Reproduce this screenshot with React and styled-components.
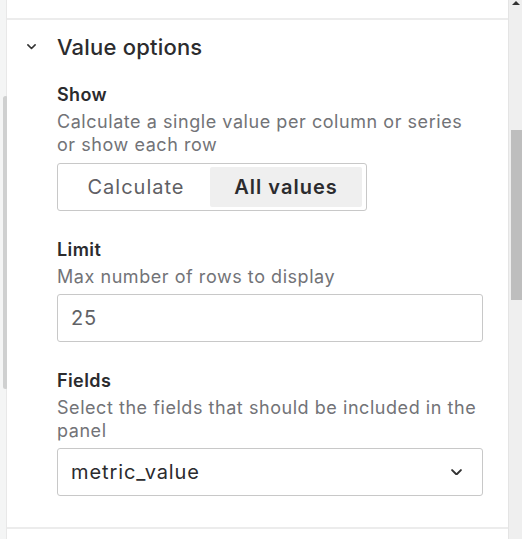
import React from 'react'
import styled, { createGlobalStyle } from 'styled-components'

const GlobalStyle = createGlobalStyle`
  html, body { margin: 0; padding: 0; background: #fff; }
  body { font-family: Inter, "Noto Sans", sans-serif; }
`

const Page = styled.div`
  display: flex;
  width: 522px;
  height: 539px;
  overflow: hidden;
`

const LeftRail = styled.div`
  width: 7px;
  background: #f4f5f5;
  border-right: 1px solid #e8e8e8;
  padding-top: 96px;
  padding-left: 3px;
  box-sizing: border-box;
`

const LeftThumb = styled.div`
  width: 5px;
  height: 293px;
  border-radius: 3px;
  background: #cfd0d0;
`

const Main = styled.div`
  flex: 1;
  display: flex;
  flex-direction: column;
  background: #fff;
`

const TopGap = styled.div`
  height: 18px;
  border-bottom: 2px solid #ececec;
`

const Section = styled.div`
  height: 507px;
  border-bottom: 2px solid #ececec;
  display: flex;
  flex-direction: column;
`

const Header = styled.div`
  display: flex;
  align-items: center;
  height: 54px;
  padding-left: 20px;
`

const ChevronWrap = styled.span`
  width: 9px;
  display: flex;
  margin-right: 21px;
  color: #333;
`

const HeaderTitle = styled.span`
  font-size: 22px;
  font-weight: 500;
  letter-spacing: 0.2px;
  color: #2c2c2e;
`

const Body = styled.div`
  padding-left: 50px;
  padding-right: 25px;
`

const Field = styled.div`
  margin-top: ${p => p.$top}px;
`

const Label = styled.div`
  font-size: 18px;
  font-weight: 600;
  letter-spacing: 0.4px;
  color: #2b2b2e;
  line-height: 22px;
`

const Desc = styled.div`
  max-width: 421px;
  font-size: 18px;
  letter-spacing: 0.55px;
  color: #727377;
  line-height: 23px;
  margin-top: 4px;
`

const Toggle = styled.div`
  display: flex;
  margin-top: 7px;
  width: 310px;
  height: 48px;
  box-sizing: border-box;
  border: 1px solid #c8c8c8;
  border-radius: 3px;
  padding: 3px 4px;
`

const ToggleOption = styled.div`
  flex: ${p => (p.$active ? '0 0 152px' : '1')};
  display: flex;
  align-items: center;
  justify-content: center;
  font-size: 20px;
  letter-spacing: 1px;
  font-weight: ${p => (p.$active ? 600 : 400)};
  color: ${p => (p.$active ? '#2b2b2e' : '#5f6064')};
  background: ${p => (p.$active ? '#efefef' : 'transparent')};
  border-radius: 2px;
`

const Box = styled.div`
  margin-top: 6px;
  height: 48px;
  box-sizing: border-box;
  border: 1px solid #c8c8c8;
  border-radius: 3px;
  display: flex;
  align-items: center;
  justify-content: space-between;
  padding: 0 20px 0 13px;
  font-size: 20px;
  letter-spacing: 0.9px;
  color: ${p => (p.$dark ? '#2b2b2e' : '#616266')};
`

const RightRail = styled.div`
  width: 14px;
  background: #efefef;
  border-left: 1px solid #e4e4e4;
  box-sizing: border-box;
  display: flex;
  flex-direction: column;
  align-items: flex-end;
`

const ArrowUp = styled.div`
  width: 0;
  height: 0;
  border-left: 4px solid transparent;
  border-right: 4px solid transparent;
  border-bottom: 4px solid #333;
  margin: 1px 0 0;
  align-self: center;
`

const RightThumb = styled.div`
  margin-top: 125px;
  width: 11px;
  height: 170px;
  background: #bebebe;
`

const SelectChevron = styled.span`
  display: flex;
  color: #333;
`

const Chevron = ({ size = 9 }) => (
  <svg width={size} height={size * 0.6} viewBox="0 0 10 6" fill="none">
    <path d="M1 1l4 4 4-4" stroke="currentColor" strokeWidth="1.8" strokeLinecap="round" strokeLinejoin="round" />
  </svg>
)

export default function App() {
  return (
    <Page>
      <GlobalStyle />
      <LeftRail>
        <LeftThumb />
      </LeftRail>
      <Main>
        <TopGap />
        <Section>
          <Header>
            <ChevronWrap><Chevron /></ChevronWrap>
            <HeaderTitle>Value options</HeaderTitle>
          </Header>
          <Body>
            <Field $top={10}>
              <Label>Show</Label>
              <Desc>Calculate a single value per column or series or show each row</Desc>
              <Toggle>
                <ToggleOption>Calculate</ToggleOption>
                <ToggleOption $active>All values</ToggleOption>
              </Toggle>
            </Field>
            <Field $top={28}>
              <Label>Limit</Label>
              <Desc>Max number of rows to display</Desc>
              <Box>25</Box>
            </Field>
            <Field $top={28}>
              <Label>Fields</Label>
              <Desc>Select the fields that should be included in the panel</Desc>
              <Box $dark>
                metric_value
                <SelectChevron><Chevron size={11} /></SelectChevron>
              </Box>
            </Field>
          </Body>
        </Section>
      </Main>
      <RightRail>
        <ArrowUp />
        <RightThumb />
      </RightRail>
    </Page>
  )
}
